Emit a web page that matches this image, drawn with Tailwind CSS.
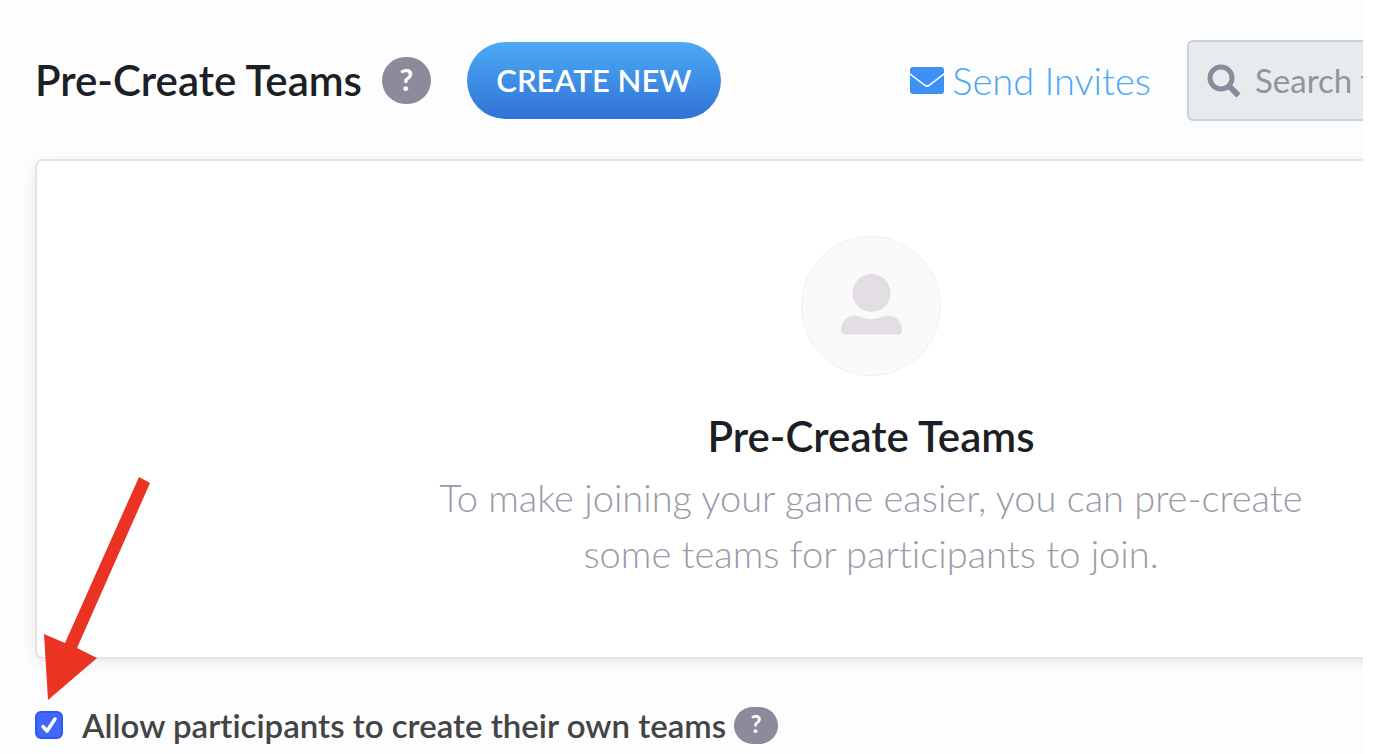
<!DOCTYPE html>
<html lang="en">

<head>
    <meta charset="UTF-8" />
    <meta name="viewport" content="width=device-width, initial-scale=1.0" />
    <script src="https://cdn.jsdelivr.net/npm/@tailwindcss/browser@4"></script>
    <title>Pre-Create Teams</title>
</head>

<body class="bg-white font-['Lato',sans-serif] text-[#1b1f26] [font-variant-ligatures:none]">
    <div class="relative mr-[29px] min-h-screen overflow-hidden bg-[#fdfdfd] pl-[35px] pt-10">
        <!-- content runs past the right edge of the panel -->
        <main class="-mr-[344px]">
            <header class="flex h-[81px] items-center">
                <h1 class="text-[42px] font-semibold whitespace-nowrap">Pre-Create Teams</h1>
                <button type="button" aria-label="About pre-created teams" class="ml-5 flex h-[47px] w-[49px] shrink-0 items-center justify-center rounded-full bg-[#8b8b9b] pb-1 text-[30px] font-bold leading-none text-white">?</button>
                <button type="button" class="ml-9 h-[77px] w-[254px] shrink-0 rounded-full bg-linear-to-b from-[#4caaf6] to-[#3272d6] text-[31px] font-semibold whitespace-nowrap text-white">CREATE NEW</button>
                <a href="#" class="ml-auto flex shrink-0 items-center gap-2 text-[38px] font-light text-[#47a8f5] whitespace-nowrap">
                    <svg class="h-[27px] w-[34px]" viewBox="0 0 34 27" fill="#3f90f4" aria-hidden="true">
                        <path d="M3 0h28a3 3 0 0 1 3 3v3L19 17.500q-2 1.400-4 0L0 6V3a3 3 0 0 1 3-3z" />
                        <path d="M0 8 14.500 19q2.500 1.800 5 0L34 8V24a3 3 0 0 1-3 3H3a3 3 0 0 1-3-3z" />
                    </svg>
                    Send Invites
                </a>
                <label class="ml-9 flex h-[81px] w-[520px] shrink-0 items-center gap-[14px] rounded-md border-2 border-[#c9d3db] bg-[#e7ebee] pl-[18px]">
                    <svg class="h-[34px] w-[34px] shrink-0" viewBox="0 0 34 34" fill="none" stroke="#8b8b9b" aria-hidden="true">
                        <circle cx="14" cy="14" r="11" stroke-width="5" />
                        <path d="M22 22 31.500 31.500" stroke-width="6" />
                    </svg>
                    <input type="search" aria-label="Search teams" placeholder="Search teams" class="min-w-0 flex-1 bg-transparent text-[33px] outline-none placeholder:text-[#8f959d]" />
                </label>
            </header>

            <section class="mt-[38px] flex flex-col items-center rounded-lg border-2 border-[#e4e4e4] bg-white pt-[75px] pb-[76px] text-center shadow-[0_4px_14px_rgba(0,0,0,0.08)]">
                <div class="flex size-[140px] items-center justify-center rounded-full border border-[#f1f1f1] bg-[#fafafa] pb-1">
                    <svg class="h-[61px] w-[61px]" viewBox="0 0 61 61" fill="#e2dee4" aria-hidden="true">
                        <circle cx="30.500" cy="19" r="19" />
                        <path d="M0 56.500C0 48 6 41.500 14 41.500c5 0 8 3.500 16.500 3.500S42 41.500 47 41.500c8 0 14 6.500 14 15q0 4-4 4H4q-4 0-4-4z" />
                    </svg>
                </div>
                <h2 class="mt-[30px] text-[42px] leading-[60px] font-semibold">Pre-Create Teams</h2>
                <p class="mt-[3px] w-[900px] text-[38px] leading-[56px] font-light text-[#9a9aa8]">To make joining your game easier, you can pre-create some teams for participants to join.</p>
            </section>

            <div class="mt-11 flex items-center">
                <input id="allow-teams" type="checkbox" checked class="peer size-7 appearance-none rounded-md border-2 border-[#3158f3] bg-[#3f68f6]" />
                <svg class="pointer-events-none -ml-7 size-7 opacity-0 peer-checked:opacity-100" viewBox="0 0 28 28" fill="none" stroke="#fff" stroke-width="3.500" stroke-linecap="round" stroke-linejoin="round" aria-hidden="true">
                    <path d="M8 15.500 12 20 20 8" />
                </svg>
                <label for="allow-teams" class="ml-[19px] text-[33px] leading-[44px] font-semibold text-[#444]">Allow participants to create their own teams</label>
                <button type="button" aria-label="About participant teams" class="ml-2 flex h-[37px] w-11 items-center justify-center rounded-full bg-[#8b8b9b] pb-0.5 text-2xl leading-none font-bold text-white">?</button>
            </div>
        </main>

        <!-- arrow pointing at the checkbox -->
        <svg class="pointer-events-none absolute top-[477px] left-[43px] h-[223px] w-[108px]" viewBox="0 0 108 223" fill="#eb3323" aria-hidden="true">
            <path d="M96 0 107 6 34 171 54 181 5 223 1 157 22 166z" />
        </svg>
    </div>
</body>

</html>
